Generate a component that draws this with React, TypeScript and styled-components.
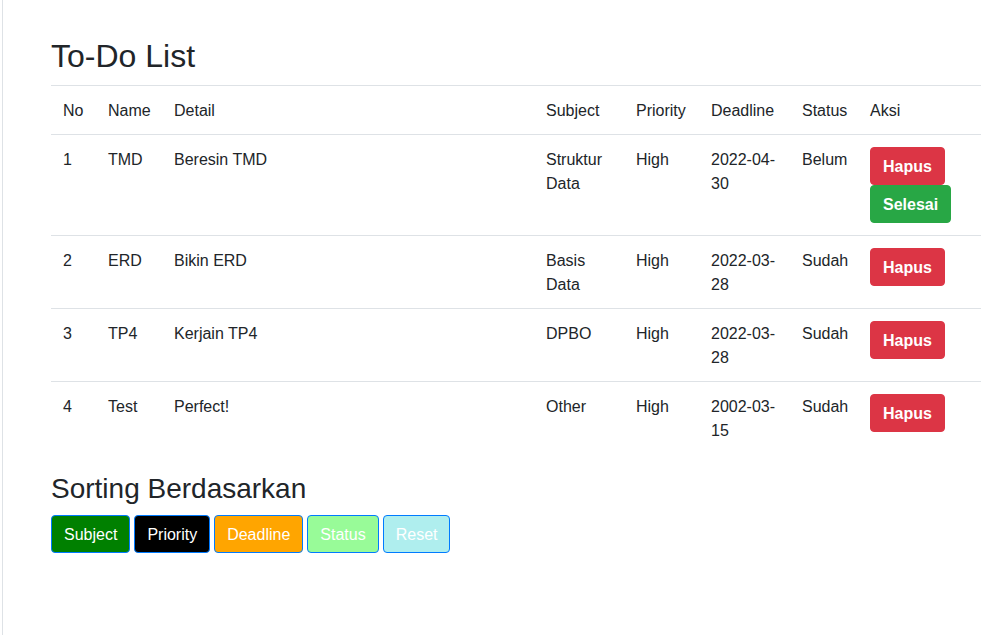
import React from "react";
import styled, { createGlobalStyle } from "styled-components";

const GlobalStyle = createGlobalStyle`
  html, body {
    margin: 0;
    padding: 0;
    background: #ffffff;
  }
  body {
    font-family: "Liberation Sans", Arial, sans-serif;
    font-size: 16px;
    line-height: 1.5;
    color: #212529;
  }
  * { box-sizing: border-box; }
`;

const Page = styled.div`
  margin-left: 2px;
  min-height: 100vh;
  border-left: 1px solid #dee2e6;
  padding: 37px 0 0 48px;
`;

const Title = styled.h2`
  margin: 0 0 10px 0;
  font-size: 32px;
  font-weight: 500;
  line-height: 1.2;
`;

const SubTitle = styled.h3`
  margin: 18px 0 9px 0;
  font-size: 28px;
  font-weight: 500;
  line-height: 1.2;
`;

const Table = styled.table`
  width: 930px;
  border-collapse: collapse;
  table-layout: fixed;
  margin-bottom: 16px;
`;

const HeadCell = styled.th`
  text-align: left;
  font-weight: 400;
  padding: 13px 12px 11px;
  vertical-align: top;
  border-top: 1px solid #dee2e6;
`;

const Cell = styled.td<{ $action?: boolean }>`
  padding: ${(p) => (p.$action ? "12px" : "13px 12px 11px")};
  vertical-align: top;
  border-top: 1px solid #dee2e6;
`;

const ActionStack = styled.div`
  display: flex;
  flex-direction: column;
  align-items: flex-start;
`;

const ActionButton = styled.button<{ $tone: "danger" | "success" }>`
  font-family: inherit;
  font-size: 16px;
  font-weight: 700;
  line-height: 1.5;
  color: #ffffff;
  padding: 7px 12px 5px;
  border-radius: 4px;
  border: 1px solid ${(p) => (p.$tone === "danger" ? "#dc3545" : "#28a745")};
  background: ${(p) => (p.$tone === "danger" ? "#dc3545" : "#28a745")};
  cursor: pointer;
`;

const SortBar = styled.div`
  display: flex;
  gap: 4px;
`;

const SortButton = styled.button<{ $bg: string }>`
  font-family: inherit;
  font-size: 16px;
  font-weight: 400;
  line-height: 1.5;
  color: #ffffff;
  padding: 7px 12px 5px;
  border-radius: 4px;
  border: 1px solid #007bff;
  background: ${(p) => p.$bg};
  cursor: pointer;
`;

const cols = [45, 66, 372, 90, 75, 91, 68, 123];
const headers = ["No", "Name", "Detail", "Subject", "Priority", "Deadline", "Status", "Aksi"];

type Row = {
  no: number;
  name: string;
  detail: string;
  subject: string;
  priority: string;
  deadline: string;
  status: string;
};

const rows: Row[] = [
  { no: 1, name: "TMD", detail: "Beresin TMD", subject: "Struktur Data", priority: "High", deadline: "2022-04-30", status: "Belum" },
  { no: 2, name: "ERD", detail: "Bikin ERD", subject: "Basis Data", priority: "High", deadline: "2022-03-28", status: "Sudah" },
  { no: 3, name: "TP4", detail: "Kerjain TP4", subject: "DPBO", priority: "High", deadline: "2022-03-28", status: "Sudah" },
  { no: 4, name: "Test", detail: "Perfect!", subject: "Other", priority: "High", deadline: "2002-03-15", status: "Sudah" },
];

const sorts = [
  { label: "Subject", bg: "#008000" },
  { label: "Priority", bg: "#000000" },
  { label: "Deadline", bg: "#ffa500" },
  { label: "Status", bg: "#98fb98" },
  { label: "Reset", bg: "#afeeee" },
];

export default function App() {
  return (
    <>
      <GlobalStyle />
      <Page>
        <Title>To-Do List</Title>
        <Table>
          <colgroup>
            {cols.map((w, i) => (
              <col key={i} style={{ width: w }} />
            ))}
          </colgroup>
          <thead>
            <tr>
              {headers.map((h) => (
                <HeadCell key={h}>{h}</HeadCell>
              ))}
            </tr>
          </thead>
          <tbody>
            {rows.map((r) => (
              <tr key={r.no}>
                <Cell>{r.no}</Cell>
                <Cell>{r.name}</Cell>
                <Cell>{r.detail}</Cell>
                <Cell>{r.subject}</Cell>
                <Cell>{r.priority}</Cell>
                <Cell>{r.deadline}</Cell>
                <Cell>{r.status}</Cell>
                <Cell $action>
                  <ActionStack>
                    <ActionButton $tone="danger">Hapus</ActionButton>
                    {r.status === "Belum" && <ActionButton $tone="success">Selesai</ActionButton>}
                  </ActionStack>
                </Cell>
              </tr>
            ))}
          </tbody>
        </Table>
        <SubTitle>Sorting Berdasarkan</SubTitle>
        <SortBar>
          {sorts.map((s) => (
            <SortButton key={s.label} $bg={s.bg}>
              {s.label}
            </SortButton>
          ))}
        </SortBar>
      </Page>
    </>
  );
}
